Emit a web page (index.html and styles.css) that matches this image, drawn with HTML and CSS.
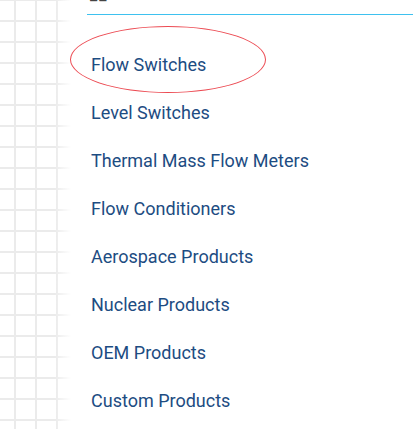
FILE: index.html
```html
<!DOCTYPE html>
<html>
<head>
<meta charset="utf-8">
<link rel="stylesheet" href="styles.css">
</head>
<body>
<div class="page">
  <div class="grid-side"></div>
  <div class="main">
    <div class="top"><span class="cut">__</span></div>
    <ul class="menu">
      <li class="item current"><a href="#">Flow Switches</a><span class="ring"></span></li>
      <li class="item"><a href="#">Level Switches</a></li>
      <li class="item"><a href="#">Thermal Mass Flow Meters</a></li>
      <li class="item"><a href="#">Flow Conditioners</a></li>
      <li class="item"><a href="#">Aerospace Products</a></li>
      <li class="item"><a href="#">Nuclear Products</a></li>
      <li class="item"><a href="#">OEM Products</a></li>
      <li class="item"><a href="#">Custom Products</a></li>
    </ul>
  </div>
</div>
</body>
</html>
```

FILE: styles.css
```css
html, body {
  margin: 0;
  padding: 0;
  background: #ffffff;
  overflow: hidden;
}
.page {
  display: flex;
  width: 413px;
  height: 429px;
}
.grid-side {
  width: 87px;
  flex: none;
  background:
    linear-gradient(to right, rgba(255,255,255,0) 0, rgba(255,255,255,0) 55px, #ffffff 71px),
    linear-gradient(to right, #ebebeb 0, #ebebeb 2px, transparent 2px) 14px 0 / 21px 21px,
    linear-gradient(to bottom, #ebebeb 0, #ebebeb 2px, transparent 2px) 0 20px / 21px 21px;
}
.main {
  flex: 1;
  min-width: 0;
}
.top {
  height: 14px;
  border-bottom: 1px solid #3ec1ef;
  position: relative;
  overflow: hidden;
}
.cut {
  position: absolute;
  left: 3px;
  top: -14px;
  font-family: Roboto, "Liberation Sans", sans-serif;
  font-size: 16px;
  line-height: 18px;
  color: #444444;
  letter-spacing: 2px;
}
.menu {
  list-style: none;
  margin: 0;
  padding: 26px 0 0 4px;
}
.item {
  position: relative;
  height: 48px;
  line-height: 48px;
  font-family: Roboto, "Liberation Sans", sans-serif;
  font-size: 18px;
}
.item a {
  color: #1d4c82;
  text-decoration: none;
}
.ring {
  position: absolute;
  left: -21px;
  top: -15px;
  width: 194px;
  height: 65px;
  border: 1px solid #ec4a52;
  border-radius: 50%;
}
```
